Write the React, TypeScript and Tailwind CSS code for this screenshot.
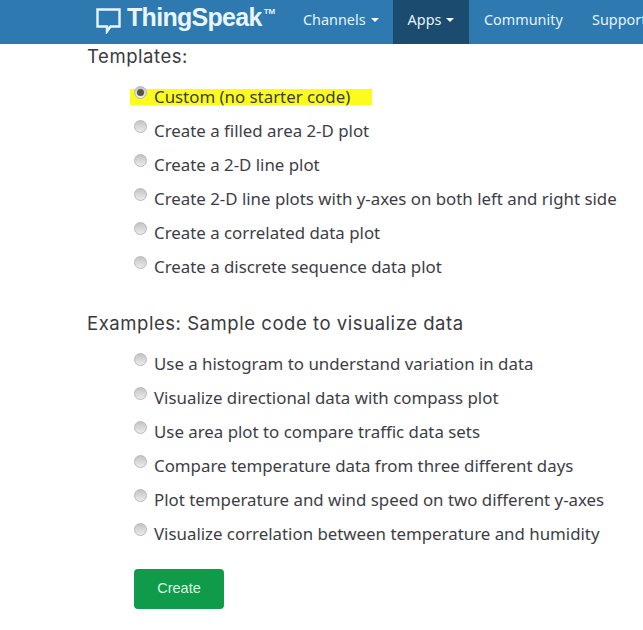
import React from 'react'

const templates = [
  'Custom (no starter code)',
  'Create a filled area 2-D plot',
  'Create a 2-D line plot',
  'Create 2-D line plots with y-axes on both left and right side',
  'Create a correlated data plot',
  'Create a discrete sequence data plot',
]

const examples = [
  'Use a histogram to understand variation in data',
  'Visualize directional data with compass plot',
  'Use area plot to compare traffic data sets',
  'Compare temperature data from three different days',
  'Plot temperature and wind speed on two different y-axes',
  'Visualize correlation between temperature and humidity',
]

function Caret() {
  return <span className="ml-[5px] inline-block align-middle border-x-[4px] border-t-[4px] border-x-transparent border-t-white" />
}

function Radio({ checked }: { checked?: boolean }) {
  return (
    <span className="mt-[-8px] flex h-[13px] w-[13px] shrink-0 items-center justify-center rounded-full border border-[#b9b9b9] bg-gradient-to-b from-[#c4c4c4] to-[#ececec]">
      {checked && <span className="h-[7px] w-[7px] rounded-full bg-[#55554a]" />}
    </span>
  )
}

function OptionRow({ label, checked }: { label: string; checked?: boolean }) {
  return (
    <label className="relative flex h-[34px] items-center text-[16.85px] text-[#3d3d45]">
      {checked && <span className="absolute left-[-4px] top-[9px] h-[16px] w-[242px] bg-[#fbfb1e]" />}
      <span className="relative flex items-center gap-[7px]">
        <Radio checked={checked} />
        <span className="whitespace-nowrap">{label}</span>
      </span>
    </label>
  )
}

export default function App() {
  return (
    <div className="h-[630px] w-[643px] overflow-hidden bg-white font-['Noto_Sans',sans-serif]">
      <nav className="flex h-[44px] items-stretch bg-[#2e7ab0] pl-[96px] text-[14.4px] text-[#e4f3fb]">
        <div className="flex w-[192px] shrink-0 items-start pt-[3px]">
          <svg width="25" height="26" viewBox="0 0 25 26" fill="none" stroke="#e8f5fb" strokeWidth="2.4" className="mt-[5px]">
            <path d="M1.5 1.5h22v17h-9l-3.5 5v-5h-9.5z" />
          </svg>
          <span className="ml-[6px] font-['Liberation_Sans',sans-serif] text-[25px] leading-[29px] font-bold tracking-[-0.7px] text-[#e8f5fb]">ThingSpeak</span>
          <span className="ml-[2px] mt-[3px] font-['Liberation_Sans',sans-serif] text-[8px] leading-[12px] font-bold">TM</span>
        </div>
        <div className="flex w-[105px] shrink-0 items-center whitespace-nowrap pb-[4px] pl-[15px]">
          Channels
          <Caret />
        </div>
        <div className="flex w-[76px] shrink-0 items-center justify-center bg-[#1b4c6f] pb-[4px]">
          Apps
          <Caret />
        </div>
        <div className="flex w-[108px] shrink-0 items-center pb-[4px] pl-[15px]">Community</div>
        <div className="flex shrink-0 items-center pb-[4px] pl-[15px]">Support</div>
      </nav>

      <div className="pl-[87px]">
        <h2 className="h-[24px] font-['Inter',sans-serif] text-[18.5px] leading-[24px] tracking-[0.55px] text-[#3a3a40]">Templates:</h2>
        <div className="mt-[12px] pl-[47px]">
          {templates.map((t, i) => (
            <OptionRow key={t} label={t} checked={i === 0} />
          ))}
        </div>

        <h2 className="mt-[27px] h-[24px] font-['Inter',sans-serif] text-[18.5px] leading-[24px] tracking-[0.55px] text-[#3a3a40]">
          Examples: Sample code to visualize data
        </h2>
        <div className="mt-[12px] pl-[47px]">
          {examples.map((t) => (
            <OptionRow key={t} label={t} />
          ))}
        </div>

        <button className="ml-[47px] mt-[18px] h-[40px] w-[90px] rounded-[4px] bg-[#0f9b4a] font-['Liberation_Sans',sans-serif] text-[14.5px] text-[#d9f7e3]">
          Create
        </button>
      </div>
    </div>
  )
}
